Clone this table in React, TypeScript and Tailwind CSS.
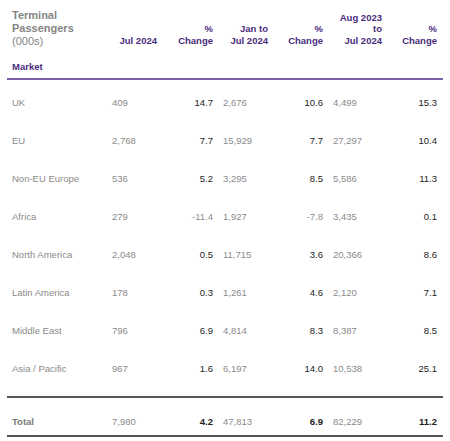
import React from 'react';

type Row = {
  market: string;
  jul: string;
  julChg: string;
  ytd: string;
  ytdChg: string;
  roll: string;
  rollChg: string;
};

const rows: Row[] = [
  { market: 'UK', jul: '409', julChg: '14.7', ytd: '2,676', ytdChg: '10.6', roll: '4,499', rollChg: '15.3' },
  { market: 'EU', jul: '2,768', julChg: '7.7', ytd: '15,929', ytdChg: '7.7', roll: '27,297', rollChg: '10.4' },
  { market: 'Non-EU Europe', jul: '536', julChg: '5.2', ytd: '3,295', ytdChg: '8.5', roll: '5,586', rollChg: '11.3' },
  { market: 'Africa', jul: '279', julChg: '-11.4', ytd: '1,927', ytdChg: '-7.8', roll: '3,435', rollChg: '0.1' },
  { market: 'North America', jul: '2,048', julChg: '0.5', ytd: '11,715', ytdChg: '3.6', roll: '20,366', rollChg: '8.6' },
  { market: 'Latin America', jul: '178', julChg: '0.3', ytd: '1,261', ytdChg: '4.6', roll: '2,120', rollChg: '7.1' },
  { market: 'Middle East', jul: '796', julChg: '6.9', ytd: '4,814', ytdChg: '8.3', roll: '8,387', rollChg: '8.5' },
  { market: 'Asia / Pacific', jul: '967', julChg: '1.6', ytd: '6,197', ytdChg: '14.0', roll: '10,538', rollChg: '25.1' },
];

const cols = 'grid grid-cols-[100px_55px_56px_55px_55px_59px_55px]';

// negative changes are printed grey, positive ones dark
const Change = ({ v }: { v: string }) => (
  <div className={`px-[5px] text-right ${v.startsWith('-') ? 'text-[#8a8a8a]' : 'text-[#222]'}`}>{v}</div>
);

const Head = ({ lines }: { lines: string[] }) => (
  <div className="px-[5px] pb-[2px] text-right text-[9.5px] font-bold leading-[11.5px] text-[#4a2c7d]">
    {lines.map((l) => (
      <div key={l}>{l}</div>
    ))}
  </div>
);

export default function App() {
  return (
    <div className="w-[450px] h-[441px] bg-white font-[family-name:'Liberation_Sans',Arial,sans-serif]">
      <div className="ml-[7px] w-[436px] pt-[9px]">
        {/* header */}
        <div className="border-b-2 border-[#7a60a6] pb-[5px]">
          <div className={`${cols} items-end`}>
            <div className="px-[5px] text-[11px] leading-[13px] text-[#858585]">
              <div className="font-bold">Terminal</div>
              <div className="font-bold">Passengers</div>
              <div>(000s)</div>
            </div>
            <Head lines={['Jul 2024']} />
            <Head lines={['%', 'Change']} />
            <Head lines={['Jan to', 'Jul 2024']} />
            <Head lines={['%', 'Change']} />
            <Head lines={['Aug 2023', 'to', 'Jul 2024']} />
            <Head lines={['%', 'Change']} />
          </div>
          <div className="mt-[13px] px-[5px] text-[9.5px] font-bold leading-[12px] text-[#4a2c7d]">Market</div>
        </div>

        {/* body */}
        <div className="pt-[4px] text-[9.5px] text-[#8a8a8a]">
          {rows.map((r) => (
            <div key={r.market} className={`${cols} h-[38px] items-center`}>
              <div className="px-[5px]">{r.market}</div>
              <div className="px-[5px]">{r.jul}</div>
              <Change v={r.julChg} />
              <div className="px-[5px]">{r.ytd}</div>
              <Change v={r.ytdChg} />
              <div className="px-[5px]">{r.roll}</div>
              <Change v={r.rollChg} />
            </div>
          ))}
        </div>

        {/* total */}
        <div
          className={`${cols} mt-[8px] h-[41px] items-center border-y-2 border-[#555] pt-[11px] text-[9.5px] text-[#8a8a8a]`}
        >
          <div className="px-[5px] font-bold text-[#7a7a7a]">Total</div>
          <div className="px-[5px]">7,980</div>
          <div className="px-[5px] text-right font-bold text-[#222]">4.2</div>
          <div className="px-[5px]">47,813</div>
          <div className="px-[5px] text-right font-bold text-[#222]">6.9</div>
          <div className="px-[5px]">82,229</div>
          <div className="px-[5px] text-right font-bold text-[#222]">11.2</div>
        </div>
      </div>
    </div>
  );
}
